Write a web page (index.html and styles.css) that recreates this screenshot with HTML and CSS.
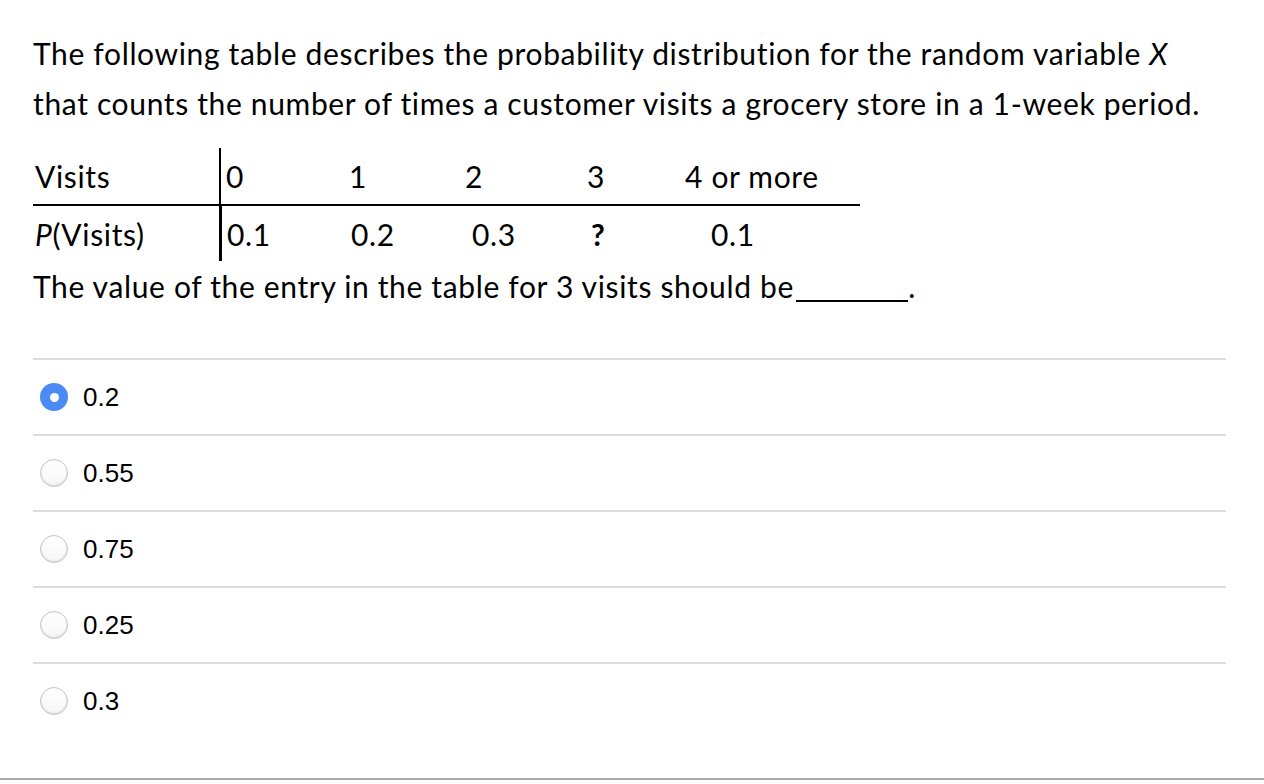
FILE: index.html
```html
<!DOCTYPE html>
<html>
<head>
<meta charset="utf-8">
<link rel="stylesheet" href="styles.css">
</head>
<body>
<div class="page">
  <div class="question">
    <p class="prompt">The following table describes the probability distribution for the random variable <i>X</i><br>that counts the number of times a customer visits a grocery store in a 1-week period.</p>
    <div class="dist">
      <div class="cell label r1">Visits</div>
      <div class="cell r1 vline p7">0</div>
      <div class="cell r1 p50">1</div>
      <div class="cell r1 p46">2</div>
      <div class="cell r1 p48">3</div>
      <div class="cell r1 p35">4 or more</div>
      <div class="cell label r2"><i>P</i>(Visits)</div>
      <div class="cell r2 vline thick p7">0.1</div>
      <div class="cell r2 p52">0.2</div>
      <div class="cell r2 p53">0.3</div>
      <div class="cell r2 p52 q">?</div>
      <div class="cell r2 p62">0.1</div>
    </div>
    <p class="follow">The value of the entry in the table for 3 visits should be <span class="blank"></span>.</p>
  </div>
  <ul class="options">
    <li class="option"><span class="radio checked"></span><span class="opt-text">0.2</span></li>
    <li class="option"><span class="radio"></span><span class="opt-text">0.55</span></li>
    <li class="option"><span class="radio"></span><span class="opt-text">0.75</span></li>
    <li class="option"><span class="radio"></span><span class="opt-text">0.25</span></li>
    <li class="option"><span class="radio"></span><span class="opt-text">0.3</span></li>
  </ul>
  <div class="footer-line"></div>
</div>
</body>
</html>
```

FILE: styles.css
```css
html, body {
  margin: 0;
  padding: 0;
  background: #fff;
}
.page {
  width: 1264px;
  height: 784px;
  display: flex;
  flex-direction: column;
  color: #000;
}
.question {
  padding: 28px 0 0 33px;
  font-family: Lato, "Liberation Sans", sans-serif;
  font-size: 30px;
  letter-spacing: 0.65px;
}
.prompt {
  margin: 0;
  line-height: 50px;
  white-space: nowrap;
}
.dist {
  display: grid;
  grid-template-columns: 186px 81px 120px 120px 110px 210px;
  width: 827px;
  margin-top: 20px;
  font-size: 30px;
}
.cell {
  display: flex;
  align-items: center;
  box-sizing: border-box;
}
.cell.label {
  padding-left: 2px;
}
.r1 {
  height: 58px;
  border-bottom: 2px solid #000;
}
.r2 {
  height: 55px;
}
.vline {
  border-left: 2px solid #000;
}
.vline.thick {
  border-left: 3px solid #000;
}
.q { font-weight: 700; }
.p7 { padding-left: 5px; }
.p35 { padding-left: 35px; }
.p46 { padding-left: 45px; }
.p48 { padding-left: 47px; }
.p50 { padding-left: 49px; }
.p52 { padding-left: 51px; }
.p53 { padding-left: 52px; }
.p62 { padding-left: 61px; }
.follow {
  margin: 0;
  line-height: 50px;
}
.blank {
  display: inline-block;
  width: 112px;
  height: 0;
  border-bottom: 2px solid #000;
  margin-left: -6px;
  vertical-align: -4px;
}
.options {
  list-style: none;
  margin: 47px 0 0 33px;
  padding: 0;
  width: 1193px;
}
.option {
  height: 76px;
  box-sizing: border-box;
  border-top: 2px solid #dcdcdc;
  display: flex;
  align-items: center;
  font-family: "Liberation Sans", Arial, sans-serif;
  font-size: 26px;
}
.radio {
  width: 28px;
  height: 28px;
  box-sizing: border-box;
  border-radius: 50%;
  margin-left: 7px;
  margin-right: 15px;
  border: 1px solid #c4c4c4;
  background: linear-gradient(#fff, #f6f6f6);
  box-shadow: inset 0 -1px 2px rgba(0,0,0,0.12);
  display: flex;
  align-items: center;
  justify-content: center;
}
.radio.checked {
  background: #4a8bf5;
  border: none;
  box-shadow: none;
}
.radio.checked::after {
  content: "";
  width: 9px;
  height: 9px;
  border-radius: 50%;
  background: #fff;
}
.footer-line {
  margin-top: auto;
  margin-bottom: 4px;
  height: 2px;
  background: #a8a8a8;
}
```
